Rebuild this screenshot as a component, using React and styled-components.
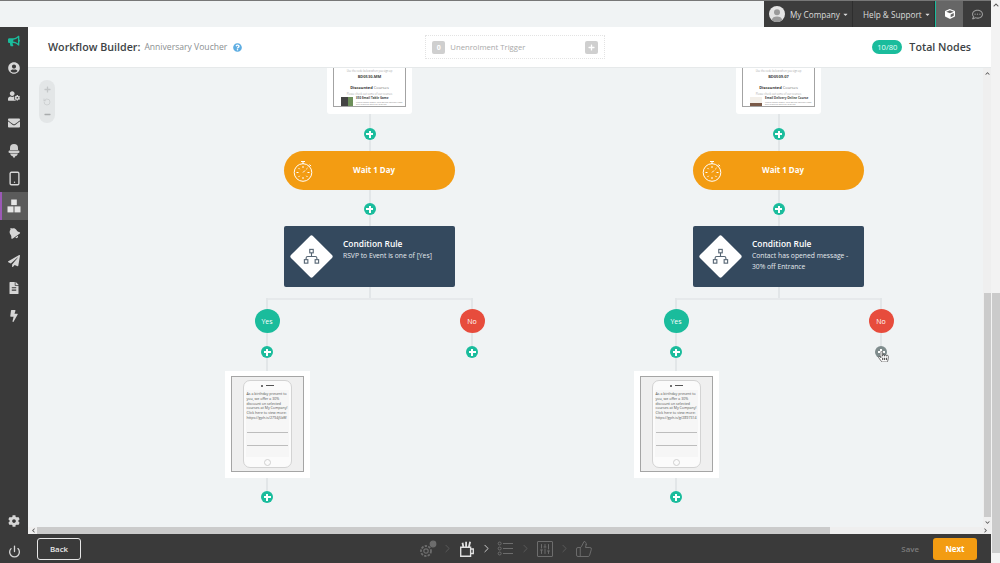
import styled, { createGlobalStyle } from 'styled-components'
import {
  FaBullhorn, FaUserCircle, FaUserCog, FaEnvelope, FaPaperPlane, FaBolt, FaCog,
  FaCube, FaRegCommentDots, FaFileAlt, FaBell, FaQuestionCircle, FaPlus, FaMinus,
  FaChevronUp, FaChevronLeft, FaChevronDown, FaChevronRight, FaCaretDown, FaHandPointer,
} from 'react-icons/fa'
import { Smartphone, Power, RotateCcw, ThumbsUp, SlidersVertical, ChevronRight } from 'lucide-react'

const GlobalStyle = createGlobalStyle`
html, body {
  margin: 0;
  padding: 0;
  overflow: hidden;
  background: #f0f3f4;
  font-family: "Open Sans", "Liberation Sans", sans-serif;
}
* { box-sizing: border-box; }
`

const Page = styled.div`
width: 1000px;
height: 563px;
display: flex;
overflow: hidden;
`
const Main = styled.div`
width: 991px;
display: flex;
flex-direction: column;
`
const PageScroll = styled.div`
width: 9px;
background: #f3f3f3;
color: #555;
display: flex;
flex-direction: column;
align-items: center;
padding-top: 2px;
font-size: 6px;
`
const PageThumb = styled.div`
width: 8px;
height: 260px;
margin-top: 285px;
background: #cbcbcb;
`

/* top bar */
const TopBar = styled.header`
height: 27px;
flex: none;
display: flex;
justify-content: flex-end;
border-top: 1px solid #777;
background: #f0f3f4;
`
const TopMenu = styled.nav`
display: flex;
height: 26px;
background: #3c3c3c;
color: #ddd;
font-size: 8.2px;
`
const MenuItem = styled.div`
width: ${p => p.$w}px;
display: flex;
align-items: center;
gap: 5px;
padding-left: ${p => p.$start}px;
border-right: 1px solid #2e2e2e;
white-space: nowrap;
svg { margin-left: -3px; font-size: 7px; }
`
const Avatar = styled.svg`
width: 16px;
height: 16px;
margin: 0 !important;
`
const MenuIcon = styled.div`
width: ${p => p.$w}px;
display: flex;
align-items: center;
justify-content: center;
background: ${p => p.$active ? '#666' : '#3c3c3c'};
border-left: ${p => p.$active ? '1.5px solid #1abc9c' : 'none'};
color: ${p => p.$active ? '#fff' : '#9a9a9a'};
font-size: ${p => p.$size}px;
`

const Body = styled.div`
flex: 1;
min-height: 0;
display: flex;
`

/* left rail */
const Sidebar = styled.aside`
width: 28px;
flex: none;
background: #3a3a3a;
display: flex;
flex-direction: column;
justify-content: space-between;
`
const RailGroup = styled.div`
display: flex;
flex-direction: column;
gap: ${p => p.$gap || 0}px;
`
const RailItem = styled.div`
height: 27.5px;
display: flex;
align-items: center;
justify-content: center;
color: ${p => p.$tone || '#d6d6d6'};
font-size: 12px;
background: ${p => p.$active ? '#5b5b5b' : 'transparent'};
border-left: ${p => p.$active ? '2px solid #9b59b6' : 'none'};
padding-right: ${p => p.$active ? '2px' : '0'};
`
const RailBottom = styled(RailItem)`
height: 24px;
font-size: 12px;
`
const TiltedBell = styled.span`
display: flex;
transform: rotate(-35deg);
`

const Content = styled.div`
flex: 1;
min-width: 0;
display: flex;
flex-direction: column;
`

/* header strip */
const Header = styled.div`
height: 41px;
flex: none;
background: #fff;
border-bottom: 1px solid #e6e9ea;
display: flex;
align-items: center;
padding: 0 20px;
`
const Title = styled.h1`
margin: 0;
font-size: 10.7px;
font-weight: 600;
color: #3d4245;
white-space: nowrap;
`
const Subtitle = styled.span`
margin-left: 4px;
font-size: 8.6px;
color: #8b8f91;
white-space: nowrap;
`
const Help = styled.span`
display: flex;
margin-left: 6px;
font-size: 9px;
color: #5dade2;
`
const Trigger = styled.div`
width: 180px;
height: 24px;
margin-left: 183px;
padding: 0 6px;
border: 1px dotted #e3e3e3;
display: flex;
align-items: center;
font-size: 7.7px;
color: #a9a9a9;
`
const TriggerBadge = styled.span`
width: 13px;
height: 13px;
border-radius: 2px;
background: #cfcfcf;
color: #fff;
font-size: 7px;
font-weight: 700;
display: flex;
align-items: center;
justify-content: center;
margin: ${p => p.$end ? '0 0 0 auto' : '0 5px 0 0'};
`
const Nodes = styled.div`
margin-left: auto;
display: flex;
align-items: center;
gap: 7px;
font-size: 10.7px;
font-weight: 600;
color: #3d4245;
`
const NodesPill = styled.span`
width: 30px;
height: 14px;
border-radius: 7px;
background: #1abc9c;
color: #e6fff9;
font-size: 7.6px;
font-weight: 400;
display: flex;
align-items: center;
justify-content: center;
`

/* workflow canvas */
const CanvasRow = styled.div`
flex: 1;
min-height: 0;
display: flex;
`
const Canvas = styled.main`
flex: 1;
position: relative;
overflow: hidden;
background: #f0f3f4;
`
const ZoomTool = styled.div`
position: absolute;
left: 11px;
top: 12px;
width: 16px;
height: 43px;
border-radius: 8px;
background: #e3e6e7;
color: #c4c7c8;
display: flex;
flex-direction: column;
align-items: center;
justify-content: space-around;
padding: 3px 0;
font-size: 7px;
`
const Branch = styled.section`
position: absolute;
top: 0;
left: ${p => p.$left}px;
width: 321px;
display: flex;
flex-direction: column;
align-items: center;
`
const Stem = styled.div`
width: 2px;
height: ${p => p.$h}px;
flex: none;
background: #e2e6e8;
`
const AddButton = styled.div`
width: 12px;
height: 12px;
flex: none;
position: relative;
border-radius: 50%;
background: ${p => p.$muted ? '#7f8c8d' : '#1abc9c'};
&::before, &::after {
  content: "";
  position: absolute;
  background: #fff;
}
&::before { left: 2.5px; right: 2.5px; top: 5px; height: 2px; }
&::after { top: 2.5px; bottom: 2.5px; left: 5px; width: 2px; }
`
const HandCursor = styled.span`
position: absolute;
left: 3px;
top: 5px;
z-index: 2;
display: flex;
font-size: 11px;
color: #fff;
svg { stroke: #333; stroke-width: 30px; }
`
const WaitPill = styled.div`
width: 171px;
height: 39px;
flex: none;
border-radius: 20px;
background: #f39c12;
color: #fff;
display: flex;
align-items: center;
padding-left: 9px;
`
const WaitText = styled.span`
flex: 1;
text-align: center;
padding: 0 20px 1px 0;
font-size: 7.9px;
font-weight: 700;
`
const ConditionBox = styled.div`
width: 171px;
height: 61px;
flex: none;
border-radius: 2px;
background: #34495e;
color: #fff;
display: flex;
align-items: center;
padding-left: 5px;
`
const Diamond = styled.div`
width: 31px;
height: 31px;
flex: none;
margin: 0 6.5px;
border-radius: 2px;
background: #fff;
transform: rotate(45deg);
display: flex;
align-items: center;
justify-content: center;
svg { transform: rotate(-45deg); }
`
const ConditionText = styled.div`
align-self: flex-start;
margin: 11px 0 0 10px;
display: flex;
flex-direction: column;
font-size: 6.75px;
line-height: 11px;
color: #e4e9ee;
`
const ConditionTitle = styled.strong`
font-size: 8.4px;
font-weight: 600;
line-height: 13px;
color: #fff;
`
const Fork = styled.div`
width: 205px;
display: flex;
justify-content: space-between;
position: relative;
&::before {
  content: "";
  position: absolute;
  left: -1px;
  right: -1px;
  top: 0;
  height: 14px;
  border: 2px solid #e6e9eb;
  border-bottom: none;
  border-radius: 3px 3px 0 0;
}
`
const Arm = styled.div`
width: 0;
display: flex;
flex-direction: column;
align-items: center;
position: relative;
`
const Answer = styled.div`
width: 25px;
height: 24px;
flex: none;
border-radius: 50%;
background: ${p => p.$tone};
color: #fff;
font-size: 7px;
display: flex;
align-items: center;
justify-content: center;
position: relative;
`
const AddWrap = styled.div`
position: relative;
flex: none;
`

/* email preview */
const EmailCard = styled.div`
width: 85px;
height: 46px;
flex: none;
background: #fff;
border-radius: 0 0 3px 3px;
padding: 0 6px 7px;
`
const EmailFrame = styled.div`
height: 39px;
background: #fff;
border: 1.5px solid #a3a3a3;
border-top: none;
display: flex;
flex-direction: column;
align-items: center;
color: #555;
overflow: hidden;
`
const TinyLine = styled.span`
margin-top: 1px;
font-size: 2.6px;
line-height: 4px;
color: #aaa;
white-space: nowrap;
`
const Code = styled.b`
margin-top: 1px;
font-size: 4px;
line-height: 6px;
color: #444;
`
const Divider = styled.i`
width: 100%;
height: 1px;
margin-top: 2px;
background: #eee;
`
const Heading = styled.span`
margin-top: 3px;
font-size: 4px;
line-height: 6px;
color: #777;
b { color: #333; }
`
const Product = styled.div`
width: 100%;
display: flex;
gap: 3px;
margin-top: 1px;
padding-left: ${p => p.$indent}px;
`
const Thumb = styled.div`
width: 12px;
height: 10px;
flex: none;
background: ${p => p.$bg};
`
const ProductText = styled.div`
font-size: 2.4px;
line-height: 2.8px;
color: #888;
b { display: block; font-size: 3px; line-height: 3.6px; color: #444; }
`

/* sms preview */
const SmsCard = styled.div`
width: 85px;
height: 107px;
flex: none;
background: #fff;
padding: 5px 6px;
`
const SmsFrame = styled.div`
height: 96px;
background: #efefef;
border: 1px solid #a5a5a5;
display: flex;
justify-content: center;
padding-top: 3px;
`
const PhoneBody = styled.div`
width: 49px;
height: 88px;
border: 1px solid #d3d3d3;
border-radius: 7px;
background: #fbfbfb;
display: flex;
flex-direction: column;
align-items: center;
`
const Speaker = styled.div`
height: 9px;
flex: none;
display: flex;
align-items: center;
gap: 3px;
&::before { content: ""; width: 2px; height: 2px; border-radius: 50%; background: #444; }
&::after { content: ""; width: 8px; height: 1px; background: #555; }
`
const PhoneScreen = styled.div`
width: 43px;
height: 67px;
flex: none;
padding: 2px 1px;
background: #f6f6f6;
display: flex;
flex-direction: column;
font-size: 3.6px;
line-height: 4.8px;
color: #555;
white-space: pre;
`
const ScreenRule = styled.i`
height: 1px;
flex: none;
background: #bdbdbd;
margin-top: ${p => p.$top}px;
`
const HomeButton = styled.div`
width: 7px;
height: 7px;
margin-top: 2px;
border: 1px solid #d0d0d0;
border-radius: 50%;
`

/* canvas scrollbars */
const VScroll = styled.div`
width: 8px;
flex: none;
background: #efefef;
color: #555;
font-size: 5px;
display: flex;
flex-direction: column;
align-items: center;
padding-top: 3px;
`
const VThumb = styled.div`
width: 7px;
height: 224px;
margin-top: 217px;
background: #cbcbcb;
`
const VDown = styled.span`
margin-top: 3px;
display: flex;
`
const HScroll = styled.div`
height: 7px;
flex: none;
display: flex;
align-items: center;
background: #efefef;
color: #555;
font-size: 5px;
padding: 0 3px;
`
const HThumb = styled.div`
width: 793px;
height: 7px;
margin-left: 1px;
background: #cbcbcb;
`
const HRight = styled.span`
margin-left: auto;
display: flex;
`

/* footer */
const Footer = styled.footer`
height: 29px;
flex: none;
background: #3a3a3a;
display: flex;
align-items: center;
padding: 0 14px 0 9px;
`
const BackButton = styled.button`
width: 44px;
height: 22px;
border: 1px solid #e6e6e6;
border-radius: 3px;
background: transparent;
color: #e6e6e6;
font: 600 7.9px "Open Sans", sans-serif;
`
const Steps = styled.div`
margin-left: 337px;
display: grid;
grid-auto-flow: column;
grid-auto-columns: 19.5px;
justify-items: center;
align-items: center;
`
const Step = styled.span`
display: flex;
color: ${p => p.$on ? '#e2e2e2' : '#6d6d6d'};
`
const FooterActions = styled.div`
margin-left: auto;
display: flex;
align-items: center;
gap: 14px;
`
const SaveLabel = styled.span`
font-size: 7.9px;
font-weight: 600;
color: #7c7c7c;
`
const NextButton = styled.button`
width: 44px;
height: 22px;
border: none;
border-radius: 3px;
background: #f39c12;
color: #fff;
font: 700 7.9px "Open Sans", sans-serif;
`

const TimerIcon = () => (
  <svg width="20" height="22" viewBox="0 0 20 22" fill="none" stroke="#fff" strokeWidth="1">
    <circle cx="10" cy="12.5" r="8.8" />
    <path d="M8 1.5h4M10 1.5v2.5M16.5 4.5l1.6 1.6M17.4 5.3l-1.5 1.5" />
    <path d="M10 6v2M10 17v2M3.5 12.5h2M14.5 12.5h2M5.5 8l1.2 1.2M14.5 8l-1.2 1.2M5.5 17l1.2-1.2M14.5 17l-1.2-1.2M10 12.5l2-2" />
  </svg>
)

const TreeIcon = () => (
  <svg width="19" height="19" viewBox="0 0 24 24" fill="none" stroke="#566573" strokeWidth="1.4">
    <rect x="9.8" y="3" width="4.4" height="4.4" />
    <rect x="3" y="16" width="4.4" height="4.4" />
    <rect x="16.6" y="16" width="4.4" height="4.4" />
    <path d="M12 7.4v4.6M5.2 16v-2a2 2 0 0 1 2-2h9.6a2 2 0 0 1 2 2v2" />
  </svg>
)

const AvatarIcon = () => (
  <Avatar viewBox="0 0 16 16">
    <circle cx="8" cy="8" r="8" fill="#e4e4e4" />
    <circle cx="8" cy="6.2" r="3" fill="#9b9b9b" />
    <path d="M2.6 14a5.6 4.6 0 0 1 10.8 0 8 8 0 0 1-10.8 0z" fill="#9b9b9b" />
  </Avatar>
)

const BlocksIcon = () => (
  <svg width="14" height="14" viewBox="0 0 14 14" fill="#e6e6e6">
    <rect x="4.2" y="0.5" width="5.6" height="5.6" />
    <rect x="0.5" y="7.4" width="6" height="6" />
    <rect x="7.5" y="7.4" width="6" height="6" />
  </svg>
)

const CapsuleIcon = () => (
  <svg width="12" height="15" viewBox="0 0 12 15" fill="#cfcfcf">
    <path d="M2 7V5a4 4 0 0 1 8 0v2z" />
    <rect x="0.5" y="7.6" width="11" height="2.4" rx="1.2" />
    <path d="M2 10.6h8a4 4 0 0 1-3 3v1H5v-1a4 4 0 0 1-3-3z" />
  </svg>
)

const GearsIcon = () => (
  <svg width="20" height="20" viewBox="0 0 20 20" fill="none" stroke="#6d6d6d" strokeWidth="1.2">
    <circle cx="8" cy="12" r="2.2" />
    <circle cx="8" cy="12" r="5" strokeDasharray="2.4 1.2" strokeWidth="1.8" />
    <circle cx="15" cy="5" r="2.8" fill="#6d6d6d" />
  </svg>
)

const CupIcon = () => (
  <svg width="18" height="18" viewBox="0 0 20 20" fill="none" stroke="#e2e2e2" strokeWidth="1.5">
    <path d="M3 8h11v10H3zM14 10h3v5h-3" />
    <path d="M6 8l-1-5M9 8V2M12 8l1.5-6" strokeWidth="2" />
  </svg>
)

const ListIcon = () => (
  <svg width="17" height="15" viewBox="0 0 20 18" fill="none" stroke="#6d6d6d" strokeWidth="1.2">
    <circle cx="3" cy="3" r="1.8" />
    <circle cx="3" cy="9" r="1.8" />
    <circle cx="3" cy="15" r="1.8" />
    <path d="M7 3h12M7 9h12M7 15h12" />
  </svg>
)

const SliderBox = styled.span`
width: 16px;
height: 16px;
display: flex;
align-items: center;
justify-content: center;
border: 1px solid #6d6d6d;
border-radius: 1px;
color: #6d6d6d;
`

const Email = ({ code, thumb, indent, product }) => (
  <EmailCard>
    <EmailFrame>
      <TinyLine>Use the code below when you sign up</TinyLine>
      <Code>{code}</Code>
      <Divider />
      <Heading><b>Discounted</b> Courses</Heading>
      <TinyLine>Please check out some of our courses</TinyLine>
      <Product $indent={indent}>
        <Thumb $bg={thumb} />
        <ProductText>
          <b>{product}</b>
          Learn more about this online course from our experts and get started
        </ProductText>
      </Product>
    </EmailFrame>
  </EmailCard>
)

const Sms = ({ link }) => (
  <SmsCard>
    <SmsFrame>
      <PhoneBody>
        <Speaker />
        <PhoneScreen>
          {`As a birthday present to
you, we offer a 30%
discount on selected
courses at My Company!
Click here to view more:
${link}`}
          <ScreenRule $top={11} />
          <ScreenRule $top={12} />
        </PhoneScreen>
        <HomeButton />
      </PhoneBody>
    </SmsFrame>
  </SmsCard>
)

const Add = ({ muted, children }) => (
  <AddWrap>
    <AddButton $muted={muted} />
    {children}
  </AddWrap>
)

const Flow = ({ left, email, rule, link, hover }) => (
  <Branch $left={left}>
    <Email {...email} />
    <Stem $h={14} />
    <Add />
    <Stem $h={11} />
    <WaitPill>
      <TimerIcon />
      <WaitText>Wait 1 Day</WaitText>
    </WaitPill>
    <Stem $h={13} />
    <Add />
    <Stem $h={11} />
    <ConditionBox>
      <Diamond><TreeIcon /></Diamond>
      <ConditionText>
        <ConditionTitle>Condition Rule</ConditionTitle>
        {rule}
      </ConditionText>
    </ConditionBox>
    <Stem $h={11} />
    <Fork>
      <Arm>
        <Stem $h={11} />
        <Answer $tone="#1abc9c">Yes</Answer>
        <Stem $h={13} />
        <Add />
        <Stem $h={13} />
        <Sms link={link} />
        <Stem $h={13} />
        <Add />
      </Arm>
      <Arm>
        <Stem $h={11} />
        <Answer $tone="#e74c3c">No</Answer>
        <Stem $h={13} />
        <Add muted={hover}>
          {hover && <HandCursor><FaHandPointer /></HandCursor>}
        </Add>
      </Arm>
    </Fork>
  </Branch>
)

const railItems = [
  { icon: <FaBullhorn />, tone: '#1abc9c' },
  { icon: <FaUserCircle /> },
  { icon: <FaUserCog /> },
  { icon: <FaEnvelope /> },
  { icon: <CapsuleIcon /> },
  { icon: <Smartphone size={15} strokeWidth={2.2} /> },
  { icon: <BlocksIcon />, active: true },
  { icon: <TiltedBell><FaBell /></TiltedBell> },
  { icon: <FaPaperPlane /> },
  { icon: <FaFileAlt /> },
  { icon: <FaBolt /> },
]

const Chevron = ({ on }) => (
  <Step $on={on}><ChevronRight size={13} strokeWidth={on ? 1.6 : 1.1} /></Step>
)

const App = () => (
  <>
    <GlobalStyle />
    <Page>
      <Main>
        <TopBar>
          <TopMenu>
            <MenuItem $w={89} $start={5}><AvatarIcon />My Company <FaCaretDown /></MenuItem>
            <MenuItem $w={82} $start={10}>Help &amp; Support <FaCaretDown /></MenuItem>
            <MenuIcon $w={28} $size={10} $active><FaCube /></MenuIcon>
            <MenuIcon $w={28} $size={11}><FaRegCommentDots /></MenuIcon>
          </TopMenu>
        </TopBar>
        <Body>
          <Sidebar>
            <RailGroup>
              {railItems.map((item, i) => (
                <RailItem key={i} $tone={item.tone} $active={item.active}>{item.icon}</RailItem>
              ))}
            </RailGroup>
            <RailGroup $gap={6}>
              <RailBottom><FaCog /></RailBottom>
              <RailBottom><Power size={13} strokeWidth={2.4} /></RailBottom>
            </RailGroup>
          </Sidebar>
          <Content>
            <Header>
              <Title>Workflow Builder:</Title>
              <Subtitle>Anniversary Voucher</Subtitle>
              <Help><FaQuestionCircle /></Help>
              <Trigger>
                <TriggerBadge>0</TriggerBadge>
                Unenrolment Trigger
                <TriggerBadge $end><FaPlus size={7} /></TriggerBadge>
              </Trigger>
              <Nodes>
                <NodesPill>10/80</NodesPill>
                Total Nodes
              </Nodes>
            </Header>
            <CanvasRow>
              <Canvas>
                <Flow
                  left={181}
                  email={{ code: 'BD0530-MM', thumb: 'linear-gradient(90deg,#444 60%,#6d8f5a 60%)', indent: 7, product: '$50 Email Table Game' }}
                  rule="RSVP to Event is one of [Yes]"
                  link="https://gph.is/2794j5bW"
                />
                <Flow
                  left={590}
                  email={{ code: 'BD0509-07', thumb: 'linear-gradient(180deg,#f3efe9 60%,#7a5a48 60%)', indent: 7, product: 'Email Delivery Online Course' }}
                  rule={<>Contact has opened message -<br />30% off Entrance</>}
                  link="https://gph.is/g/2897314"
                  hover
                />
                <ZoomTool>
                  <FaPlus />
                  <RotateCcw size={8} />
                  <FaMinus color="#a9acad" />
                </ZoomTool>
              </Canvas>
              <VScroll>
                <FaChevronUp />
                <VThumb />
                <VDown><FaChevronDown /></VDown>
              </VScroll>
            </CanvasRow>
            <HScroll>
              <FaChevronLeft />
              <HThumb />
              <HRight><FaChevronRight /></HRight>
            </HScroll>
            <Footer>
              <BackButton>Back</BackButton>
              <Steps>
                <Step><GearsIcon /></Step>
                <Chevron />
                <Step><CupIcon /></Step>
                <Chevron on />
                <Step><ListIcon /></Step>
                <Chevron />
                <Step><SliderBox><SlidersVertical size={12} /></SliderBox></Step>
                <Chevron />
                <Step><ThumbsUp size={18} strokeWidth={1.3} /></Step>
              </Steps>
              <FooterActions>
                <SaveLabel>Save</SaveLabel>
                <NextButton>Next</NextButton>
              </FooterActions>
            </Footer>
          </Content>
        </Body>
      </Main>
      <PageScroll>
        <FaChevronUp />
        <PageThumb />
      </PageScroll>
    </Page>
  </>
)

export default App
